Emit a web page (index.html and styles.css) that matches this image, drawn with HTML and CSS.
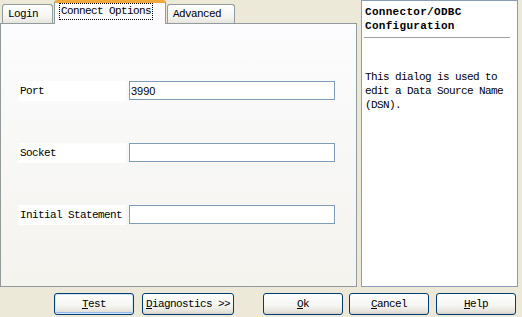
FILE: index.html
```html
<!DOCTYPE html>
<html lang="en">
<head>
    <meta charset="UTF-8">
    <title>Connector/ODBC Configuration</title>
    <link rel="stylesheet" href="styles.css">
</head>
<body>
    <div class="dialog">
        <div class="main-row">
            <div class="tab-control">
                <div class="tab-strip">
                    <div class="tab tab-login">Login</div>
                    <div class="tab tab-active"><span class="focus-box">Connect Options</span></div>
                    <div class="tab tab-advanced">Advanced</div>
                </div>
                <div class="tab-panel">
                    <div class="form-row">
                        <label class="form-label">Port</label>
                        <input type="text" class="form-input" value="3990">
                    </div>
                    <div class="form-row">
                        <label class="form-label">Socket</label>
                        <input type="text" class="form-input">
                    </div>
                    <div class="form-row">
                        <label class="form-label">Initial Statement</label>
                        <input type="text" class="form-input">
                    </div>
                </div>
            </div>
            <div class="info-panel">
                <div class="info-title">Connector/ODBC<br>Configuration</div>
                <div class="info-sep"></div>
                <div class="info-text">This dialog is used to edit a Data Source Name (DSN).</div>
            </div>
        </div>
        <div class="button-row">
            <button class="btn btn-test btn-default"><u>T</u>est</button>
            <button class="btn btn-diag"><u>D</u>iagnostics &gt;&gt;</button>
            <button class="btn btn-ok"><u>O</u>k</button>
            <button class="btn btn-cancel"><u>C</u>ancel</button>
            <button class="btn btn-help"><u>H</u>elp</button>
        </div>
    </div>
</body>
</html>
```

FILE: styles.css
```css
/* Ventana de diálogo estilo XP */
body {
    margin: 0;
    background-color: #ece9d8;
    font-family: 'Liberation Mono', 'DejaVu Sans Mono', monospace;
    font-size: 11px;
    letter-spacing: -0.6px;
    color: #000;
}

.dialog {
    width: 522px;
    height: 317px;
}

.main-row {
    display: flex;
    height: 287px;
}

/* Control de pestañas */
.tab-control {
    width: 357px;
    display: flex;
    flex-direction: column;
}

.tab-strip {
    display: flex;
    align-items: flex-end;
    height: 23px;
    padding-left: 2px;
}

.tab {
    box-sizing: border-box;
    height: 19px;
    border: 1px solid #919b9c;
    border-bottom: none;
    border-radius: 3px 3px 0 0;
    background: linear-gradient(#ffffff, #f3f3ef 70%, #e6e4dc);
    line-height: 18px;
    padding-left: 5px;
}

.tab-login {
    width: 51px;
}

.tab-advanced {
    width: 68px;
    margin-left: 1px;
}

.tab-active {
    width: 112px;
    height: 24px;
    margin-bottom: -1px;
    margin-left: 1px;
    border-top: 3px solid #f2a93b;
    background: #fcfcfe;
    padding-left: 4px;
    line-height: 16px;
    position: relative;
    z-index: 1;
}

.focus-box {
    display: inline-block;
    border: 1px dotted #000;
    padding: 0 1px;
    line-height: 15px;
}

.tab-panel {
    flex-grow: 1;
    border: 1px solid #919b9c;
    background: linear-gradient(#fcfcfe, #f4f3ee);
    padding-top: 57px;
    display: flex;
    flex-direction: column;
    gap: 43px;
}

.form-row {
    display: flex;
    align-items: center;
    height: 19px;
}

.form-label {
    width: 108px;
    height: 20px;
    margin-left: 17px;
    padding-left: 2px;
    line-height: 20px;
    background-color: #ffffff;
    box-sizing: border-box;
}

.form-input {
    box-sizing: border-box;
    width: 206px;
    height: 19px;
    margin: 0 0 0 3px;
    border: 1px solid #7f9db9;
    background-color: #ffffff;
    font-family: 'Liberation Sans', Arial, sans-serif;
    font-size: 11px;
    letter-spacing: 0;
    padding: 0 1px;
}

/* Panel de información a la derecha */
.info-panel {
    box-sizing: border-box;
    width: 157px;
    margin-left: 4px;
    border: 1px solid #8a9db5;
    background-color: #ffffff;
    padding: 4px 3px 0 3px;
}

.info-title {
    font-weight: bold;
    letter-spacing: 0.3px;
    line-height: 14px;
}

.info-sep {
    height: 1px;
    background-color: #a0a0a0;
    margin: 4px 4px 0 -1px;
}

.info-text {
    margin-top: 32px;
    line-height: 14px;
}

/* Botones de abajo */
.button-row {
    display: flex;
    padding-left: 54px;
    margin-top: 6px;
}

.btn {
    box-sizing: border-box;
    width: 80px;
    height: 22px;
    border: 1px solid #003c74;
    border-radius: 3px;
    background: linear-gradient(#ffffff, #f4f4f0 60%, #e3e1d8 90%, #d6d0c5);
    font-family: 'Liberation Mono', 'DejaVu Sans Mono', monospace;
    font-size: 11px;
    letter-spacing: -0.6px;
    color: #000;
    padding: 0;
}

.btn-default {
    box-shadow: inset 0 0 0 1px #cee7ff, inset 0 -1px 0 1px #98b8ea;
}

.btn-diag {
    width: 92px;
    margin-left: 8px;
}

.btn-ok {
    margin-left: 29px;
}

.btn-cancel {
    margin-left: 6px;
}

.btn-help {
    margin-left: 7px;
}
```
